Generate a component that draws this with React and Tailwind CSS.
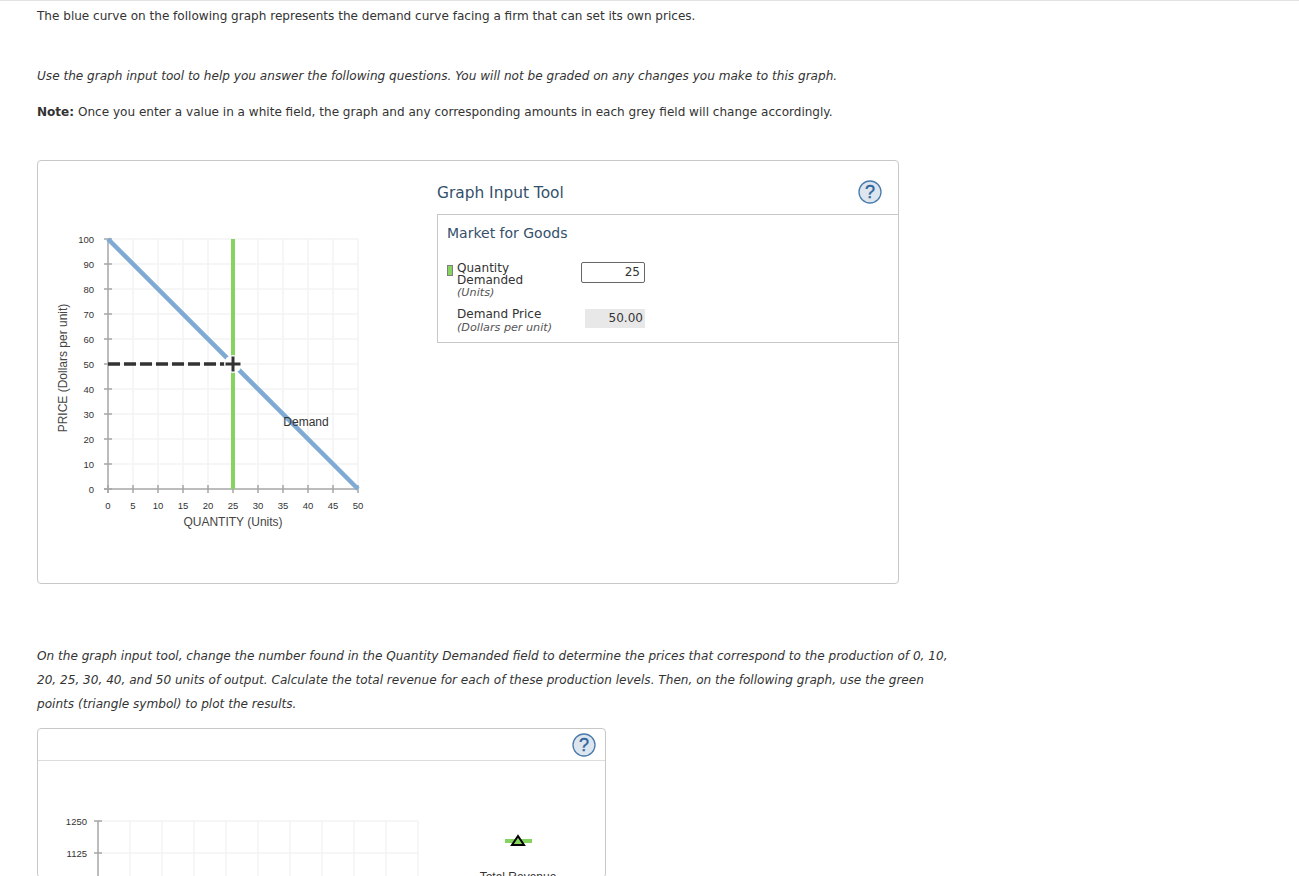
import React from 'react';

const FONT = "font-['DejaVu_Sans',Verdana,sans-serif]";
const ARIAL = "'Liberation Sans', Arial, sans-serif";

const HelpIcon = ({ size = 24 }) => (
  <svg width={size} height={size} viewBox="0 0 24 24" className="block">
    <circle cx="12" cy="12" r="11" fill="#dde6ef" stroke="#4a7bab" strokeWidth="1.3" />
    <text x="12" y="18" textAnchor="middle" fontSize="18" fill="#2f659c" stroke="#2f659c" strokeWidth="0.4" fontFamily={ARIAL}>?</text>
  </svg>
);

const range = (n) => Array.from({ length: n }, (_, i) => i);

const DemandGraph = () => {
  const px = (q) => 70 + q * 5;
  const py = (p) => 78 + (100 - p) * 2.5;
  return (
    <svg width="340" height="400" viewBox="0 0 340 400" className="block shrink-0" fontFamily={ARIAL}>
      {range(10).map((i) => (
        <line key={i} x1={px((i + 1) * 5)} x2={px((i + 1) * 5)} y1={py(100)} y2={py(0)} stroke="#f3f3f3" strokeWidth="1.5" />
      ))}
      {range(10).map((i) => (
        <line key={i} x1={px(0)} x2={px(50)} y1={py((i + 1) * 10)} y2={py((i + 1) * 10)} stroke="#f3f3f3" strokeWidth="1.5" />
      ))}
      <line x1={px(0)} x2={px(0)} y1={py(100)} y2={py(0) + 4} stroke="#a6a6a6" strokeWidth="1.5" />
      <line x1={px(0) - 4} x2={px(50)} y1={py(0)} y2={py(0)} stroke="#a6a6a6" strokeWidth="1.5" />
      {range(11).map((i) => (
        <g key={i}>
          <line x1={px(0) - 4} x2={px(0) + 4} y1={py(i * 10)} y2={py(i * 10)} stroke="#a6a6a6" strokeWidth="1.5" />
          <text x={px(0) - 14} y={py(i * 10) + 4} textAnchor="end" fontSize="9.5" fill="#333">{i * 10}</text>
          <line x1={px(i * 5)} x2={px(i * 5)} y1={py(0) - 4} y2={py(0) + 4} stroke="#a6a6a6" strokeWidth="1.5" />
          <text x={px(i * 5)} y={py(0) + 20} textAnchor="middle" fontSize="9.5" fill="#333">{i * 5}</text>
        </g>
      ))}
      <line x1={px(25)} x2={px(25)} y1={py(100)} y2={py(0)} stroke="#86d45f" strokeWidth="4" />
      <line x1={px(0)} y1={py(100)} x2={px(50)} y2={py(0)} stroke="#7faad4" strokeWidth="4.5" />
      <line x1={px(0)} x2={px(25) - 8} y1={py(50)} y2={py(50)} stroke="#333" strokeWidth="3.7" strokeDasharray="12 4" />
      <circle cx={px(25)} cy={py(50)} r="9" fill="#fff" />
      <path d={`M${px(25) - 7.5} ${py(50)}H${px(25) + 7.5}M${px(25)} ${py(50) - 7.5}V${py(50) + 7.5}`} stroke="#333" strokeWidth="3" />
      <text x="268" y="265" textAnchor="middle" fontSize="12" fill="#333">Demand</text>
      <text x="195" y="365" textAnchor="middle" fontSize="12" fill="#444">QUANTITY (Units)</text>
      <text transform="translate(29 207) rotate(-90)" textAnchor="middle" fontSize="12" fill="#444">PRICE (Dollars per unit)</text>
    </svg>
  );
};

const RevenueGraph = () => (
  <svg width="566" height="116" viewBox="0 0 566 116" className="block" fontFamily={ARIAL}>
    {range(10).map((i) => (
      <line key={i} x1={60 + (i + 1) * 32} x2={60 + (i + 1) * 32} y1="60" y2="116" stroke="#f3f3f3" strokeWidth="1.5" />
    ))}
    {[60, 92].map((y) => (
      <g key={y}>
        <line x1="60" x2="380" y1={y} y2={y} stroke="#f3f3f3" strokeWidth="1.5" />
        <line x1="56" x2="64" y1={y} y2={y} stroke="#a6a6a6" strokeWidth="1.5" />
      </g>
    ))}
    <line x1="60" x2="60" y1="60" y2="116" stroke="#a6a6a6" strokeWidth="1.5" />
    <text x="49" y="64" textAnchor="end" fontSize="9.5" fill="#333">1250</text>
    <text x="49" y="96" textAnchor="end" fontSize="9.5" fill="#333">1125</text>
    <line x1="467" x2="494" y1="80" y2="80" stroke="#86d45f" strokeWidth="4" />
    <path d="M480 75L486 84H474Z" fill="#86d45f" stroke="#000" strokeWidth="2" />
    <text x="480" y="119.5" textAnchor="middle" fontSize="12" fill="#333">Total Revenue</text>
  </svg>
);

export default function App() {
  return (
    <div className={`h-[876px] overflow-hidden border-t border-[#e3e3e3] bg-white pl-[37px] text-[12.05px] text-[#333] ${FONT}`}>
      <p className="pt-[7px] leading-[16px]">The blue curve on the following graph represents the demand curve facing a firm that can set its own prices.</p>
      <p className="mt-[44px] text-[12.09px] leading-[16px] italic">Use the graph input tool to help you answer the following questions. You will not be graded on any changes you make to this graph.</p>
      <p className="mt-[20px] leading-[16px]"><span className="font-bold">Note:</span> Once you enter a value in a white field, the graph and any corresponding amounts in each grey field will change accordingly.</p>

      <div className="mt-[40px] flex h-[424px] w-[862px] rounded border border-[#c8c8c8]">
        <div className="w-[399px] shrink-0"><DemandGraph /></div>
        <div className="min-w-0 flex-1">
          <div className="flex h-[53px] items-center justify-between pt-[9px] pr-[16px]">
            <h2 className="mt-[3px] text-[15.4px] text-[#34506b]">Graph Input Tool</h2>
            <HelpIcon />
          </div>
          <div className="h-[129px] border-y border-l border-[#c8c8c8] pl-[9px]">
            <h3 className="pt-[9px] text-[14px] leading-[18px] text-[#34506b]">Market for Goods</h3>
            <div className="mt-[20px] flex">
              <span className="mt-[3px] h-[11px] w-[6px] shrink-0 border border-[#808080] bg-[#86d45f]" />
              <div className="ml-[4px] w-[124px] leading-[12px]">
                <div>Quantity<br />Demanded</div>
                <div className="mt-[1px] text-[11.2px] italic text-[#555]">(Units)</div>
              </div>
              <div className="h-[21px] w-[64px] rounded-[2px] border border-[#666] pr-[4px] text-right leading-[19px]">25</div>
            </div>
            <div className="mt-[9px] flex pl-[10px]">
              <div className="w-[124px] leading-[13px]">
                <div>Demand Price</div>
                <div className="text-[11.2px] italic text-[#555]">(Dollars per unit)</div>
              </div>
              <div className="mt-[1px] ml-[4px] h-[19px] w-[60px] bg-[#e8e8e8] pr-[2px] text-right leading-[19px]">50.00</div>
            </div>
          </div>
        </div>
      </div>

      <p className="mt-[60px] w-[915px] text-[12.09px] leading-[24px] italic">On the graph input tool, change the number found in the Quantity Demanded field to determine the prices that correspond to the production of 0, 10, 20, 25, 30, 40, and 50 units of output. Calculate the total revenue for each of these production levels. Then, on the following graph, use the green points (triangle symbol) to plot the results.</p>

      <div className="mt-[12px] w-[569px] rounded border border-[#c8c8c8]">
        <div className="flex h-[32px] items-center justify-end border-b border-[#dcdcdc] pr-[9px]">
          <HelpIcon />
        </div>
        <RevenueGraph />
      </div>
    </div>
  );
}
